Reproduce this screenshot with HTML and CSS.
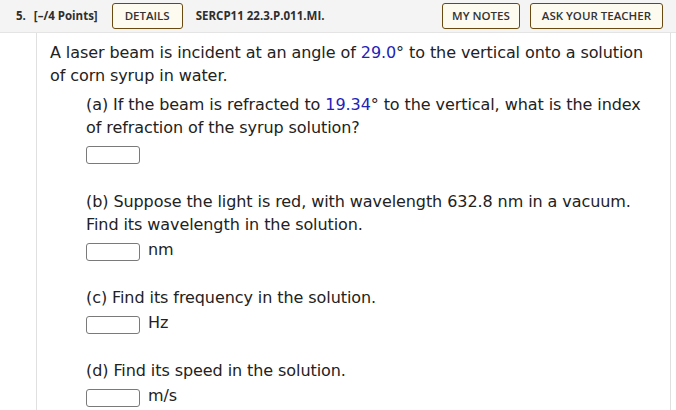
FILE: index.html
```html
<!DOCTYPE html>
<html>
<head>
<meta charset="utf-8">
<link rel="stylesheet" href="styles.css">
</head>
<body>
<div class="header">
  <span class="qnum">5.</span>
  <span class="points">[–/4 Points]</span>
  <span class="btn details">DETAILS</span>
  <span class="code">SERCP11 22.3.P.011.MI.</span>
  <span class="spacer"></span>
  <span class="btn notes">MY NOTES</span>
  <span class="btn ask">ASK YOUR TEACHER</span>
</div>
<div class="content">
  <p class="intro">A laser beam is incident at an angle of <span class="num">29.0</span>° to the vertical onto a solution of corn syrup in water.</p>
  <div class="part">
    <p>(a) If the beam is refracted to <span class="num">19.34</span>° to the vertical, what is the index of refraction of the syrup solution?</p>
    <div class="answer"><span class="box"></span></div>
  </div>
  <div class="part">
    <p>(b) Suppose the light is red, with wavelength 632.8 nm in a vacuum. Find its wavelength in the solution.</p>
    <div class="answer"><span class="box"></span><span class="unit">nm</span></div>
  </div>
  <div class="part tight">
    <p>(c) Find its frequency in the solution.</p>
    <div class="answer"><span class="box"></span><span class="unit">Hz</span></div>
  </div>
  <div class="part tight">
    <p>(d) Find its speed in the solution.</p>
    <div class="answer"><span class="box"></span><span class="unit">m/s</span></div>
  </div>
</div>
</body>
</html>
```
FILE: styles.css
```css
html, body {
  margin: 0;
  padding: 0;
  background: #ffffff;
}
body {
  width: 676px;
  height: 410px;
  overflow: hidden;
}
.header {
  display: flex;
  align-items: center;
  height: 31px;
  background: #f4f4f4;
  border-bottom: 1px solid #e4e4e4;
  padding-left: 16px;
  padding-right: 13px;
  font-family: "Open Sans", "Liberation Sans", sans-serif;
  font-weight: 700;
  font-size: 11.5px;
  color: #2e2e2e;
  padding-bottom: 1px;
}
.qnum {
  margin-right: 8px;
}
.points {
  margin-right: 14px;
}
.btn {
  display: flex;
  align-items: center;
  justify-content: center;
  height: 24px;
  padding: 0 11px;
  border: 1.5px solid #6a4a10;
  border-radius: 3px;
  background: #fdfaf0;
  color: #333;
  font-weight: 600;
}
.details {
  margin-right: 13px;
  padding: 0 12px;
}
.notes {
  padding: 0 9px;
}
.spacer {
  flex: 1;
}
.btn + .btn {
  margin-left: 10px;
}
.content {
  margin-left: 36px;
  width: 600px;
  height: 380px;
  border-left: 1px solid #e0e0e0;
  border-right: 1px solid #e0e0e0;
  padding: 8px 20px 0 13px;
  font-family: "DejaVu Sans", Verdana, sans-serif;
  font-size: 16px;
  letter-spacing: -0.08px;
  line-height: 23px;
  color: #222;
}
.content p {
  margin: 0;
}
.num {
  color: #2323b8;
}
.intro {
  margin-bottom: 6px !important;
}
.part {
  margin-left: 36px;
}
.answer {
  display: flex;
  align-items: center;
  height: 23px;
  margin-top: 4px;
}
.box {
  display: inline-block;
  width: 52px;
  height: 16px;
  border: 1px solid #7a7a7a;
  border-radius: 3px;
  background: #fff;
}
.unit {
  margin-left: 8px;
  position: relative;
  top: -2px;
}
.part + .part {
  margin-top: 24px;
}
.part + .part.tight {
  margin-top: 23px;
}
```
